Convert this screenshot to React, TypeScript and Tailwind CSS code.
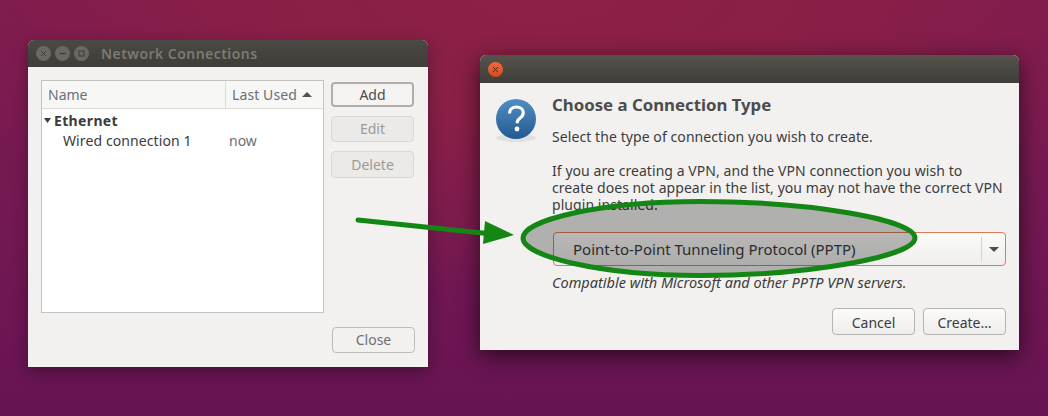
const font = 'font-["Noto_Sans",sans-serif]';

function Btn({ label, cls }: { label: string; cls: string }) {
  return (
    <div className={`flex w-[83px] items-center justify-center rounded-[4px] border text-[14px] leading-none ${cls}`}>
      {label}
    </div>
  );
}

function NetworkWindow() {
  return (
    <div className="absolute left-[28px] top-[40px] flex h-[327px] w-[400px] flex-col rounded-t-[6px] bg-[#f2f1f0] shadow-[0_5px_16px_rgba(0,0,0,0.32)]">
      {/* Title bar */}
      <div className="flex h-[27px] items-center rounded-t-[6px] bg-gradient-to-b from-[#4b4943] to-[#3f3d38] pl-[8px]">
        <div className="flex gap-[4px]">
          <div className="flex h-[15px] w-[15px] items-center justify-center rounded-full bg-[#6a6862] text-[#3d3b37]">
            <svg width="7" height="7" viewBox="0 0 7 7"><path d="M1 1l5 5M6 1l-5 5" stroke="currentColor" strokeWidth="1" /></svg>
          </div>
          <div className="flex h-[15px] w-[15px] items-center justify-center rounded-full bg-[#6a6862] text-[#3d3b37]">
            <svg width="7" height="7" viewBox="0 0 7 7"><path d="M0.5 3.5h6" stroke="currentColor" strokeWidth="1.2" /></svg>
          </div>
          <div className="flex h-[15px] w-[15px] items-center justify-center rounded-full bg-[#6a6862] text-[#3d3b37]">
            <svg width="7" height="7" viewBox="0 0 7 7"><rect x="1" y="1" width="5" height="5" fill="none" stroke="currentColor" strokeWidth="1" /></svg>
          </div>
        </div>
        <span className="ml-[12px] text-[14px] font-semibold tracking-[0.45px] text-[#7c7a73]">Network Connections</span>
      </div>
      {/* Body */}
      <div className="flex flex-1 flex-col px-[13px] pt-[13px]">
        <div className="flex gap-[7px]">
          <div className="h-[233px] w-[283px] border border-[#c4c3c0] bg-white">
            <div className="flex h-[28px] border-b border-[#dcdbd8] bg-[#f7f7f6] text-[14px] text-[#6d6f76]">
              <div className="flex w-[184px] items-center border-r border-[#dcdbd8] pl-[6px]">Name</div>
              <div className="flex flex-1 items-center pl-[6px] tracking-[0.1px]">
                Last Used
                <svg className="ml-[5px]" width="10" height="5" viewBox="0 0 10 5"><path d="M0 5L5 0l5 5z" fill="#55534f" /></svg>
              </div>
            </div>
            <div className="flex h-[22px] items-center text-[14px] font-bold tracking-[0.35px] text-[#3c3c3c]">
              <svg className="ml-[2px] mr-[3px]" width="7" height="5" viewBox="0 0 7 5"><path d="M0 0h7L3.5 5z" fill="#3c3c3c" /></svg>
              Ethernet
            </div>
            <div className="flex h-[19px] items-center text-[14px] text-[#3c3c3c]">
              <span className="w-[187px] pl-[21px] tracking-[0.1px]">Wired connection 1</span>
              <span className="text-[#6d6f76]">now</span>
            </div>
          </div>
          <div className="flex flex-col pt-[2px]">
            <Btn label="Add" cls="h-[25px] border-2 border-[#b0afab] bg-[#f5f4f3] text-[#4c4c4c]" />
            <Btn label="Edit" cls="mt-[9px] h-[26px] border-[#d9d8d5] bg-[#ebeae8] text-[#9a9a98]" />
            <Btn label="Delete" cls="mt-[9px] h-[27px] border-[#d9d8d5] bg-[#ebeae8] text-[#9a9a98]" />
          </div>
        </div>
        <div className="mt-[14px] flex justify-end">
          <Btn label="Close" cls="h-[26px] border-[#bdbcb8] bg-[#f2f1f0] text-[#6d6f76]" />
        </div>
      </div>
    </div>
  );
}

function TypeWindow() {
  return (
    <div className="absolute left-[480px] top-[55px] flex h-[295px] w-[539px] flex-col rounded-t-[6px] bg-[#f2f1f0] shadow-[0_6px_22px_rgba(0,0,0,0.62)]">
      {/* Title bar */}
      <div className="flex h-[28px] items-center rounded-t-[6px] bg-gradient-to-b from-[#55534c] to-[#3f3d38] pl-[8px]">
        <div className="flex h-[15px] w-[15px] items-center justify-center rounded-full bg-gradient-to-b from-[#ee6a3c] to-[#d9481c] text-[#5a2410]">
          <svg width="7" height="7" viewBox="0 0 7 7"><path d="M1 1l5 5M6 1l-5 5" stroke="currentColor" strokeWidth="1" /></svg>
        </div>
      </div>
      {/* Body */}
      <div className="flex flex-1 pl-[15px] pr-[13px] pt-[12px] text-[14px] text-[#3c3c3c]">
        <svg className="mt-[3px] shrink-0" width="42" height="44" viewBox="0 0 42 44">
          <defs>
            <linearGradient id="q" x1="0" y1="0" x2="0" y2="1">
              <stop offset="0" stopColor="#4f8ec4" />
              <stop offset="1" stopColor="#24598f" />
            </linearGradient>
          </defs>
          <ellipse cx="21" cy="40" rx="20" ry="4" fill="#000" opacity="0.07" />
          <circle cx="21" cy="21" r="20" fill="url(#q)" />
          <path d="M14.5 15.5c0-4 3-6.5 7-6.5s6.8 2.4 6.8 5.8c0 2.6-1.4 4-3.4 5.4-1.9 1.3-2.7 2.2-2.7 4.3v.8" fill="none" stroke="#fff" strokeWidth="3.2" />
          <circle cx="22" cy="31" r="2.4" fill="#fff" />
        </svg>
        <div className="ml-[15px] flex flex-1 flex-col">
          <div className="text-[16.8px] font-bold leading-[20px] text-[#4c4c4c]">Choose a Connection Type</div>
          <div className="mt-[13px] leading-[17px] tracking-[0.08px]">Select the type of connection you wish to create.</div>
          <div className="mt-[17px] leading-[17px] tracking-[0.06px]">
            If you are creating a VPN, and the VPN connection you wish to
            <br />
            create does not appear in the list, you may not have the correct VPN
            <br />
            plugin installed.
          </div>
          <div className="ml-[1px] mt-[19px] flex h-[34px] items-stretch rounded-[4px] border border-[#e07a55] bg-gradient-to-b from-[#fbfbfa] to-[#efeeed]">
            <div className="flex flex-1 items-center pl-[19px] pt-[1px] text-[15px]">Point-to-Point Tunneling Protocol (PPTP)</div>
            <div className="my-[4px] w-px bg-[#d5d4d1]" />
            <div className="flex w-[23px] items-center justify-center">
              <svg width="10" height="5" viewBox="0 0 10 5"><path d="M0 0h10L5 5z" fill="#4c4c4c" /></svg>
            </div>
          </div>
          <div className="mt-[8px] text-[14.5px] italic leading-[17px]">Compatible with Microsoft and other PPTP VPN servers.</div>
          <div className="mt-[17px] flex justify-end gap-[8px]">
            <Btn label="Cancel" cls="h-[27px] border-[#b5b4b0] bg-gradient-to-b from-[#fbfbfa] to-[#eeedeb] pt-[2px]" />
            <Btn label="Create…" cls="h-[27px] border-[#b5b4b0] bg-gradient-to-b from-[#fbfbfa] to-[#eeedeb] pt-[2px]" />
          </div>
        </div>
      </div>
    </div>
  );
}

export default function App() {
  return (
    <div className={`relative h-[416px] w-[1048px] overflow-hidden bg-[radial-gradient(ellipse_60%_75%_at_52%_-5%,#8d2045_0%,#891f47_45%,rgba(125,28,80,0)_100%),linear-gradient(180deg,#7e1b50_0%,#751952_45%,#671452_100%)] ${font}`}>
      <NetworkWindow />
      <TypeWindow />
      {/* Annotation drawn over the screenshot */}
      <svg className="absolute left-0 top-0" width="1048" height="416" viewBox="0 0 1048 416">
        <path
          d="M523 238C523 220 600 201.5 700 201.5C812 201.5 915 220 915 238C915 256 812 275.5 700 275.5C600 275.5 523 256 523 238z"
          fill="rgba(0,0,0,0.27)"
          stroke="#138613"
          strokeWidth="5"
        />
        <path d="M358 220L492 234" stroke="#138613" strokeWidth="5" strokeLinecap="round" />
        <path d="M514 235L485 221L483 244z" fill="#138613" />
      </svg>
    </div>
  );
}
